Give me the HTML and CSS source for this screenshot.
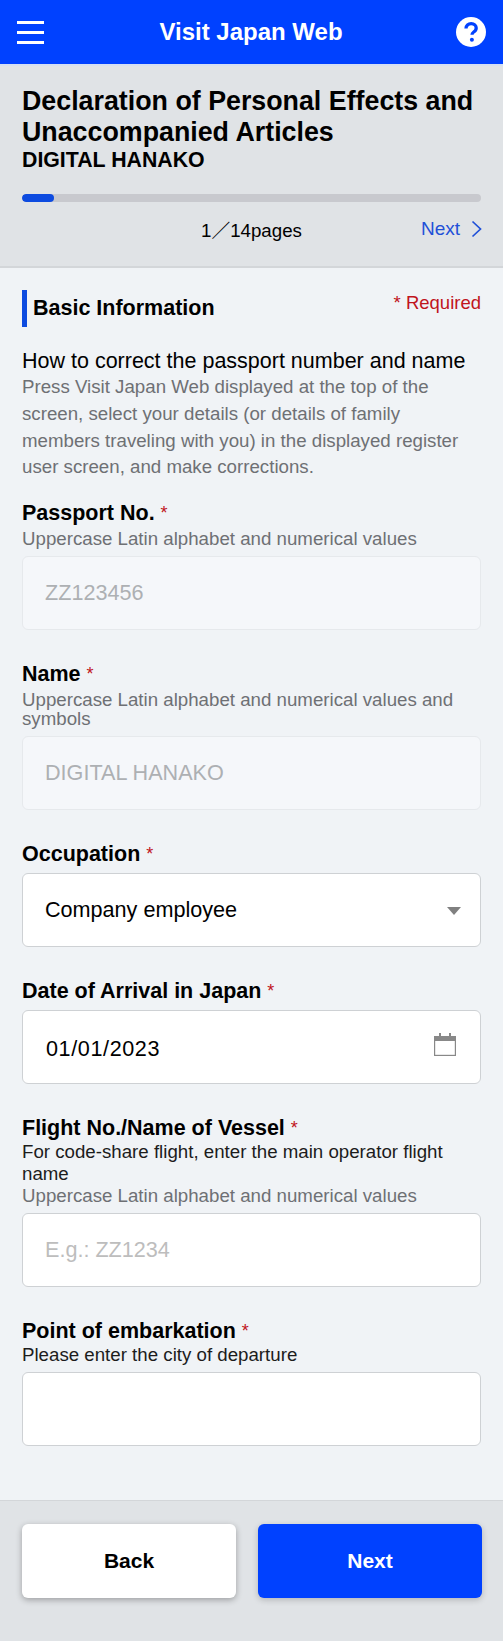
FILE: index.html
```html
<!DOCTYPE html>
<html lang="en">
<head>
<meta charset="utf-8">
<title>Visit Japan Web</title>
<link rel="stylesheet" href="styles.css">
</head>
<body>
<header class="topbar">
  <button class="menu" aria-label="Menu"><span></span><span></span><span></span></button>
  <h1 class="brand">Visit Japan Web</h1>
  <svg class="help" viewBox="0 0 30 30" aria-label="Help"><circle cx="15" cy="15" r="15" fill="#fff"/><path d="M10 11.600c0-3 2.200-4.900 5.200-4.900 3 0 5 1.800 5 4.300 0 2-1 3-2.500 4-1.300.9-1.700 1.400-1.700 2.800" fill="none" stroke="#0041ff" stroke-width="3.300"/><circle cx="15.900" cy="22.700" r="2" fill="#0041ff"/></svg>
</header>
<section class="summary">
  <h2 class="title">Declaration of Personal Effects and Unaccompanied Articles</h2>
  <p class="person">DIGITAL HANAKO</p>
  <div class="progress"><div class="progress-fill"></div></div>
  <div class="pager">
    <span class="pages">1／14pages</span>
    <a class="next-link">Next<svg viewBox="0 0 11 18" class="chev"><path d="M1.500 1.500 9.500 9l-8 7.500" fill="none" stroke="#1f50d8" stroke-width="1.700"/></svg></a>
  </div>
</section>
<main class="content">
  <div class="section-head">
    <h3 class="section-title">Basic Information</h3>
    <span class="required-note">* Required</span>
  </div>
  <p class="how">How to correct the passport number and name</p>
  <p class="how-text">Press Visit Japan Web displayed at the top of the screen, select your details (or details of family members traveling with you) in the displayed register user screen, and make corrections.</p>

  <div class="field first">
    <label class="label">Passport No. <i>*</i></label>
    <p class="hint">Uppercase Latin alphabet and numerical values</p>
    <input class="box locked" value="ZZ123456" disabled>
  </div>
  <div class="field">
    <label class="label">Name <i>*</i></label>
    <p class="hint">Uppercase Latin alphabet and numerical values and symbols</p>
    <input class="box locked" value="DIGITAL HANAKO" disabled>
  </div>
  <div class="field">
    <label class="label">Occupation <i>*</i></label>
    <div class="select-wrap">
      <div class="box select-value">Company employee</div>
      <span class="caret"></span>
    </div>
  </div>
  <div class="field">
    <label class="label">Date of Arrival in Japan <i>*</i></label>
    <div class="select-wrap">
      <input class="box date" value="01/01/2023">
      <svg class="cal" viewBox="0 0 22 23"><path d="M5 0h2v3h8V0h2v3h5v20H0V3h5z" fill="#888"/><rect x="1.200" y="8" width="19.600" height="13.800" fill="#fff"/></svg>
    </div>
  </div>
  <div class="field">
    <label class="label">Flight No./Name of Vessel <i>*</i></label>
    <p class="desc">For code-share flight, enter the main operator flight name</p>
    <p class="hint hint-after">Uppercase Latin alphabet and numerical values</p>
    <input class="box" placeholder="E.g.: ZZ1234">
  </div>
  <div class="field last">
    <label class="label">Point of embarkation <i>*</i></label>
    <p class="desc">Please enter the city of departure</p>
    <input class="box">
  </div>
</main>
<footer class="actions">
  <button class="btn back">Back</button>
  <button class="btn go">Next</button>
</footer>
</body>
</html>
```

FILE: styles.css
```css
* { box-sizing: border-box; }
html, body { margin: 0; padding: 0; }
body {
  width: 503px;
  height: 1641px;
  background: #f0f3f6;
  color: #000;
  font-family: "Liberation Sans", Arial, "Noto Sans CJK JP", sans-serif;
  display: flex;
  flex-direction: column;
}
h1, h2, h3, p { margin: 0; }

.topbar {
  height: 64px;
  background: #0041ff;
  display: flex;
  align-items: center;
  justify-content: space-between;
  padding: 0 17px;
}
.menu {
  width: 27px;
  height: 23px;
  padding: 0;
  border: 0;
  background: none;
  display: flex;
  flex-direction: column;
  justify-content: space-between;
}
.menu span { display: block; height: 3px; background: #fff; }
.brand { color: #fff; font-size: 24px; font-weight: 700; line-height: 30px; margin-left: 2px; }
.help { width: 30px; height: 30px; }

.summary {
  height: 204px;
  background: #e0e3e6;
  border-top: 2px solid #d5dff2;
  border-bottom: 2px solid #d3d6d9;
  padding: 20px 22px 0;
}
.title { font-size: 26.800px; font-weight: 700; line-height: 31px; }
.person { font-size: 21.300px; font-weight: 700; line-height: 23px; margin-top: 1px; }
.progress { height: 8px; margin-top: 22px; border-radius: 4px; background: #c8c9ce; overflow: hidden; }
.progress-fill { width: 32px; height: 100%; border-radius: 4px; background: #0d4be0; }
.pager { position: relative; display: flex; justify-content: flex-end; margin-top: 14px; height: 26px; align-items: center; }
.pages { position: absolute; left: 0; right: 0; top: 2px; text-align: center; font-size: 18.700px; line-height: 26px; }
.next-link { position: relative; color: #1f50d8; font-size: 19px; line-height: 22px; display: flex; align-items: center; gap: 11px; margin-right: -1px; }
.chev { width: 11px; height: 18px; }

.content { flex: 1; padding: 22px 22px 0; }
.section-head { display: flex; justify-content: space-between; align-items: flex-start; }
.section-title {
  border-left: 5px solid #0d4be0;
  padding-left: 6px;
  font-size: 21.500px;
  font-weight: 700;
  line-height: 37px;
  height: 37px;
}
.required-note { color: #c0141c; font-size: 18.500px; line-height: 24px; margin-top: 1px; }
.how { font-size: 21.500px; line-height: 26px; margin-top: 21px; }
.how-text { color: #6e7074; font-size: 18.700px; line-height: 26.800px; }

.field { margin-top: 31px; }
.field.first { margin-top: 19px; }
.label { display: block; font-size: 21.500px; font-weight: 700; line-height: 26px; }
.label i { color: #c0141c; font-style: normal; font-weight: 400; font-size: 18px; line-height: 1; position: relative; top: -1px; }
.hint { color: #6e7074; font-size: 18.700px; line-height: 19px; margin-top: 2.500px; }
.hint-after { margin-top: 1.500px; }
.desc { font-size: 18.700px; line-height: 21.500px; color: #1c1c1c; }

.box {
  display: block;
  width: 100%;
  height: 74px;
  margin-top: 6px;
  padding: 0 22px;
  border: 1px solid #ced1d4;
  border-radius: 6px;
  background: #fff;
  font: 400 21.600px "Liberation Sans", Arial, sans-serif;
  color: #000;
  outline: 0;
}
.hint + .box { margin-top: 8.500px; }
.box::placeholder { color: #bdbdbd; opacity: 1; }
.box.locked { background: #f5f7fa; border-color: #e6e9ec; color: #adb0b3; -webkit-text-fill-color: #adb0b3; opacity: 1; }
.select-wrap { position: relative; }
.select-value { display: flex; align-items: center; }
.caret {
  position: absolute;
  right: 20px;
  top: 34px;
  border-left: 7.500px solid transparent;
  border-right: 7.500px solid transparent;
  border-top: 8px solid #808080;
}
.date { padding: 3px 22px 0 23px; letter-spacing: .6px; }
.cal { position: absolute; right: 25px; top: 23px; width: 22px; height: 23px; }

.actions {
  height: 141px;
  background: #e0e3e6;
  border-top: 1px solid #d3d6d9;
  padding: 23px 21px 0 22px;
  display: flex;
  gap: 22px;
}
.btn {
  height: 74px;
  border: 0;
  border-radius: 6px;
  padding-bottom: 2px;
  font: 700 21px "Liberation Sans", Arial, sans-serif;
}
.back { width: 214px; background: #fff; color: #000; box-shadow: 0 2px 6px rgba(0,0,0,.3); }
.go { width: 224px; background: #0041ff; color: #fff; box-shadow: 0 2px 6px rgba(0,0,0,.2); }
```
